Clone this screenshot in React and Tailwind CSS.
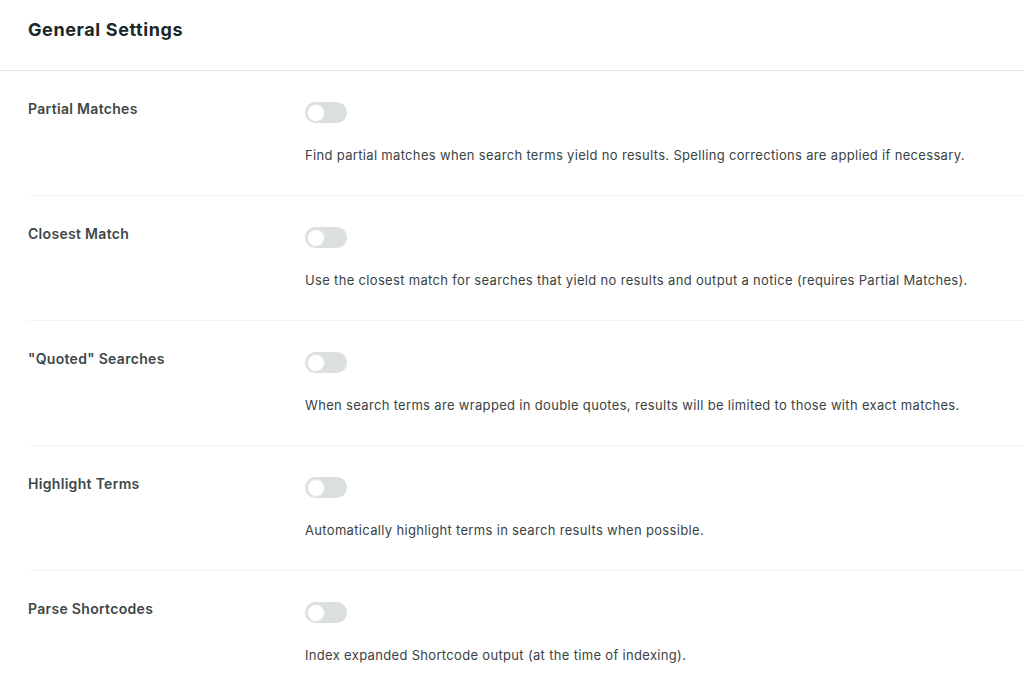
import React, { useState } from "react";

const settings = [
  {
    id: "partial",
    label: "Partial Matches",
    help: "Find partial matches when search terms yield no results. Spelling corrections are applied if necessary.",
  },
  {
    id: "closest",
    label: "Closest Match",
    help: "Use the closest match for searches that yield no results and output a notice (requires Partial Matches).",
  },
  {
    id: "quoted",
    label: "\"Quoted\" Searches",
    help: "When search terms are wrapped in double quotes, results will be limited to those with exact matches.",
  },
  {
    id: "highlight",
    label: "Highlight Terms",
    help: "Automatically highlight terms in search results when possible.",
  },
  {
    id: "shortcodes",
    label: "Parse Shortcodes",
    help: "Index expanded Shortcode output (at the time of indexing).",
  },
];

const Toggle = ({ checked, onChange }) => (
  <button
    type="button"
    onClick={() => onChange(!checked)}
    className={`relative flex h-[21px] w-[42px] items-center rounded-full transition-colors ${
      checked ? "bg-[#1e8cbe]" : "bg-[#dcdfe0]"
    }`}
  >
    <span
      className={`absolute top-[1.5px] h-[18px] w-[18px] rounded-full border border-[#e4e6e7] bg-white transition-all ${
        checked ? "left-[22px]" : "left-[1.5px]"
      }`}
    />
  </button>
);

const App = () => {
  const [values, setValues] = useState({});

  return (
    <div
      className="min-h-screen bg-white"
      style={{ fontFamily: "Inter, 'Noto Sans', sans-serif" }}
    >
      <div className="flex h-[71px] items-center border-b border-[#e8eaea] px-7 pb-[11px]">
        <h1 className="text-[18px] font-bold tracking-[0.034em] text-[#1b2828]">
          General Settings
        </h1>
      </div>

      {settings.map((item) => (
        <div
          key={item.id}
          className="ml-7 flex h-[125px] border-b border-[#f3f4f4] last:border-b-0"
        >
          <div className="w-[277px] pt-[28px]">
            <p className="text-[14px] leading-5 font-semibold tracking-[0.022em] text-[#3d4848]">
              {item.label}
            </p>
          </div>
          <div className="flex flex-col pt-[31px]">
            <Toggle
              checked={!!values[item.id]}
              onChange={(next) =>
                setValues((prev) => ({ ...prev, [item.id]: next }))
              }
            />
            <p className="mt-[22px] text-[13px] leading-5 tracking-[0.025em] text-[#3a4343]">
              {item.help}
            </p>
          </div>
        </div>
      ))}
    </div>
  );
};

export default App;
